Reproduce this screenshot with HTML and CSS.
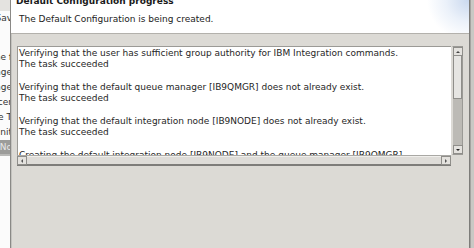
FILE: index.html
```html
<!DOCTYPE html>
<html>
<head>
<meta charset="utf-8">
<link rel="stylesheet" href="styles.css">
</head>
<body>
<div class="screen">
  <div class="bgwin">
    <div class="bgtop"></div>
    <div class="bgline l1">Sav</div>
    <div class="bgline l2">Name f</div>
    <div class="bgline l3">Manage</div>
    <div class="bgline l4">Message</div>
    <div class="bgline l5">Cancer</div>
    <div class="bgline l6">The T</div>
    <div class="bgline l7">Init</div>
    <div class="bgline sel">No</div>
  </div>
  <div class="dialog">
    <div class="header">
      <div class="title">Default Configuration progress</div>
      <div class="subtitle">The Default Configuration is being created.</div>
    </div>
    <div class="body">
      <div class="log">
        <div class="text">
          <div>Verifying that the user has sufficient group authority for IBM Integration commands.</div>
          <div>The task succeeded</div>
          <div class="blank"></div>
          <div>Verifying that the default queue manager [IB9QMGR] does not already exist.</div>
          <div>The task succeeded</div>
          <div class="blank"></div>
          <div>Verifying that the default integration node [IB9NODE] does not already exist.</div>
          <div>The task succeeded</div>
          <div class="blank"></div>
          <div>Creating the default integration node [IB9NODE] and the queue manager [IB9QMGR].</div>
        </div>
        <div class="vscroll">
          <div class="sbtn up"><span class="tri tri-up"></span></div>
          <div class="vthumb"></div>
          <div class="vtrough"></div>
          <div class="sbtn down"><span class="tri tri-down"></span></div>
        </div>
        <div class="hscroll">
          <div class="sbtn left"><span class="tri tri-left"></span></div>
          <div class="hthumb"></div>
          <div class="sbtn right"><span class="tri tri-right"></span></div>
        </div>
        <div class="corner"></div>
      </div>
    </div>
  </div>
  <div class="rightwin"></div>
</div>
</body>
</html>
```
FILE: styles.css
```css
html, body {
  margin: 0;
  padding: 0;
}
body {
  width: 474px;
  height: 248px;
  overflow: hidden;
  background: #ffffff;
  font-family: "DejaVu Sans", "Liberation Sans", sans-serif;
  color: #222222;
}
.screen {
  display: flex;
  width: 474px;
  height: 248px;
}
.bgwin {
  width: 10px;
  flex: none;
  background: #fbfbfb;
  display: flex;
  flex-direction: column;
  overflow: hidden;
  font-size: 9px;
  line-height: 15px;
  color: #333;
}
.bgtop {
  height: 11px;
  background: #e4e3e0;
}
.bgline {
  height: 15px;
  white-space: nowrap;
  direction: rtl;
  text-align: left;
  overflow: hidden;
  margin-right: -2px;
}
.l2 { margin-top: 24px; }
.sel {
  background: #9c9c9a;
  color: #e8e8e8;
  height: 14px;
  border-bottom: 2px solid #b9b9b7;
}
.dialog {
  flex: 1;
  display: flex;
  flex-direction: column;
  background: #dcdad5;
  border-left: 1px solid #8a8986;
  box-shadow: inset 1px 0 0 #c4c3bf;
  border-right: 1px solid #7d7c79;
}
.header {
  height: 33px;
  flex: none;
  background:
    radial-gradient(ellipse 42px 40px at 100% 0%, #c9d8ee 0%, rgba(222,232,246,0.6) 55%, rgba(255,255,255,0) 100%),
    #ffffff;
  border-bottom: 1px solid #b3b1ac;
  padding-left: 5px;
  overflow: hidden;
}
.title {
  font-weight: bold;
  font-size: 9px;
  line-height: 11px;
  margin-top: -4px;
  color: #1a1a1a;
}
.subtitle {
  font-size: 9px;
  line-height: 11px;
  margin-top: 7px;
  padding-left: 3px;
}
.body {
  flex: 1;
  padding: 12px 6px 0 6px;
}
.log {
  display: grid;
  grid-template-columns: 1fr 11px;
  grid-template-rows: 109px 11px;
  width: 445px;
}
.text {
  background: #ffffff;
  border: 1px solid #9b9a96;
  border-right: none;
  border-bottom: none;
  padding-left: 1px;
  padding-top: 1px;
  font-size: 9px;
  line-height: 11.3px;
  white-space: nowrap;
  overflow: hidden;
  color: #262626;
}
.blank {
  height: 11.3px;
}
.vscroll {
  display: flex;
  flex-direction: column;
  background: #bcbab5;
  border: 1px solid #9b9a96;
  border-left: 1px solid #dcdad5;
  margin-left: 1px;
  margin-right: -1px;
}
.sbtn {
  width: 9px;
  height: 9px;
  background: #e4e2de;
  border: 1px solid #8f8e8a;
  box-sizing: border-box;
  display: flex;
  align-items: center;
  justify-content: center;
  flex: none;
}
.vscroll .sbtn { width: 10px; height: 9px; }
.vthumb {
  height: 42px;
  background: #e6e5e2;
  border: 1px solid #8f8e8a;
  border-top: none;
}
.vtrough {
  flex: 1;
}
.hscroll {
  display: flex;
  background: #e4e3df;
  border-bottom: 2px solid #7e7d7a;
  border-top: 1px solid #a9a8a4;
}
.hthumb {
  flex: 1;
  background: #dedcd8;
  border-top: 1px solid #f0efec;
}
.hscroll .sbtn { height: 9px; width: 10px; }
.corner {
  background: #dcdad5;
}
.tri {
  width: 0;
  height: 0;
  display: block;
}
.tri-up {
  border-left: 2px solid transparent;
  border-right: 2px solid transparent;
  border-bottom: 2px solid #444;
}
.tri-down {
  border-left: 2px solid transparent;
  border-right: 2px solid transparent;
  border-top: 2px solid #222;
}
.tri-left {
  border-top: 2px solid transparent;
  border-bottom: 2px solid transparent;
  border-right: 2px solid #555;
}
.tri-right {
  border-top: 2px solid transparent;
  border-bottom: 2px solid transparent;
  border-left: 2px solid #555;
}
.rightwin {
  width: 3px;
  flex: none;
  background: #c9c8c4;
  border-left: 1px solid #a4a3a0;
}
```
